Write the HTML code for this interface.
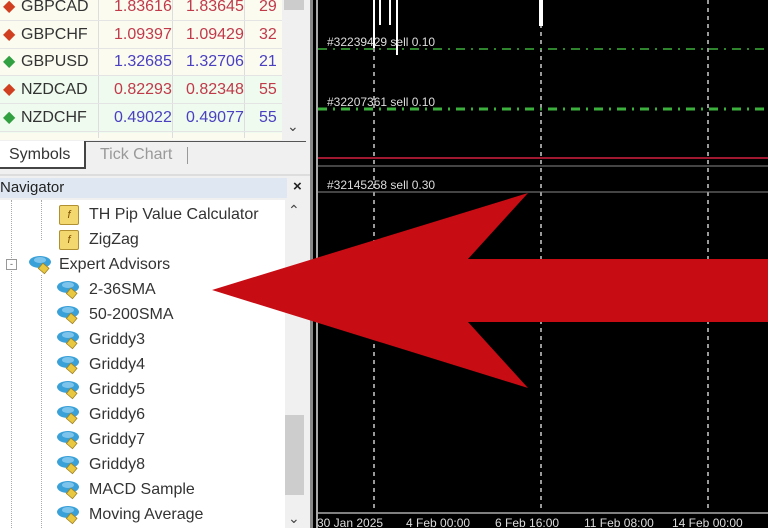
<!DOCTYPE html><html><head><style>
body{margin:0;width:768px;height:528px;overflow:hidden;background:#000;font-family:"Liberation Sans",sans-serif;position:relative}
.a{position:absolute}
.lp{left:0;top:0;width:310px;height:528px;background:#f0f0f0}
.row{position:absolute;left:0;width:282px;height:27px;font-size:16px;line-height:27px;border-bottom:1px solid #e4e4e4}
.row span{position:absolute}
.nv{position:absolute;font-size:16px;color:#333;line-height:20px}
</style></head><body>
<div class="a lp">
 <div class="a" style="left:0;top:0;width:282px;height:140px;background:#fbfbf0"></div>
 <div class="a" style="left:0;top:75px;width:282px;height:58px;background:#eefbee"></div>
 <div class="a" style="left:98px;top:0;width:1px;height:138px;background:#ddd"></div>
 <div class="a" style="left:172px;top:0;width:1px;height:138px;background:#ddd"></div>
 <div class="a" style="left:244px;top:0;width:1px;height:138px;background:#ddd"></div>
 <div class="a" style="left:282px;top:0;width:24px;height:140px;background:#f0f0f0"></div>
 <div class="a" style="left:284px;top:0;width:20px;height:10px;background:#ccc"></div>
 <div class="a" style="left:287px;top:118px;font-size:14px;color:#444">&#8964;</div>
 <div class="row" style="top:-7px"><span style="left:3px;color:#d04020">◆</span><span style="left:21px;color:#333">GBPCAD</span><span style="left:114px;color:#c03a4a">1.83616</span><span style="left:186px;color:#c03a4a">1.83645</span><span style="left:259px;color:#c03a4a">29</span></div>
 <div class="row" style="top:21px"><span style="left:3px;color:#d04020">◆</span><span style="left:21px;color:#333">GBPCHF</span><span style="left:114px;color:#c03a4a">1.09397</span><span style="left:186px;color:#c03a4a">1.09429</span><span style="left:259px;color:#c03a4a">32</span></div>
 <div class="row" style="top:48px"><span style="left:3px;color:#30a040">◆</span><span style="left:21px;color:#333">GBPUSD</span><span style="left:114px;color:#4a40c0">1.32685</span><span style="left:186px;color:#4a40c0">1.32706</span><span style="left:259px;color:#4a40c0">21</span></div>
 <div class="row" style="top:76px"><span style="left:3px;color:#d04020">◆</span><span style="left:21px;color:#333">NZDCAD</span><span style="left:114px;color:#c03a4a">0.82293</span><span style="left:186px;color:#c03a4a">0.82348</span><span style="left:259px;color:#c03a4a">55</span></div>
 <div class="row" style="top:104px"><span style="left:3px;color:#30a040">◆</span><span style="left:21px;color:#333">NZDCHF</span><span style="left:114px;color:#4a40c0">0.49022</span><span style="left:186px;color:#4a40c0">0.49077</span><span style="left:259px;color:#4a40c0">55</span></div>
 <div class="a" style="left:0;top:141px;width:306px;height:1px;background:#555"></div>
 <div class="a" style="left:0;top:141px;width:84px;height:26px;background:#fff;border-right:2px solid #444;border-bottom:2px solid #444"></div>
 <div class="a" style="left:9px;top:146px;font-size:16px;color:#333">Symbols</div>
 <div class="a" style="left:100px;top:146px;font-size:16px;color:#999">Tick Chart</div>
 <div class="a" style="left:187px;top:147px;width:1px;height:17px;background:#999"></div>
 <div class="a" style="left:0;top:174px;width:310px;height:2px;background:#ddd"></div>
 <div class="a" style="left:0;top:178px;width:287px;height:20px;background:#dfe8f2"></div>
 <div class="a" style="left:0;top:179px;font-size:15px;color:#222">Navigator</div>
 <div class="a" style="left:293px;top:178px;font-size:15px;font-weight:bold;color:#222">×</div>
 <div class="a" style="left:0;top:200px;width:285px;height:328px;background:#fff"></div>
 <div class="a" style="left:285px;top:200px;width:21px;height:328px;background:#f0f0f0"></div>
 <div class="a" style="left:285px;top:415px;width:19px;height:80px;background:#cdcdcd"></div>
 <div class="a" style="left:288px;top:202px;font-size:14px;color:#444">&#8963;</div>
 <div class="a" style="left:288px;top:510px;font-size:14px;color:#444">&#8964;</div>
 <div class="a" style="left:11px;top:200px;border-left:1px dotted #aaa;height:328px"></div>
 <div class="a" style="left:41px;top:200px;border-left:1px dotted #aaa;height:40px"></div>
 <div class="a" style="left:41px;top:275px;border-left:1px dotted #aaa;height:253px"></div>
 <div class="a" style="left:6px;top:259px;width:9px;height:9px;border:1px solid #999;background:#fff;font-size:9px;line-height:8px;text-align:center;color:#555">-</div>
 <div class="a" style="left:59px;top:205px;width:18px;height:18px;background:#f3d870;border:1px solid #b09030;border-radius:2px;font-size:11px;font-style:italic;color:#805000;text-align:center;line-height:18px">f</div>
 <div class="a" style="left:59px;top:230px;width:18px;height:18px;background:#f3d870;border:1px solid #b09030;border-radius:2px;font-size:11px;font-style:italic;color:#805000;text-align:center;line-height:18px">f</div>
 <div class="nv" style="left:89px;top:205px">TH Pip Value Calculator</div>
 <div class="nv" style="left:89px;top:230px">ZigZag</div>
 <div class="nv" style="left:59px;top:255px">Expert Advisors</div>
 <div class="nv" style="left:89px;top:280px">2-36SMA</div>
 <div class="nv" style="left:89px;top:305px">50-200SMA</div>
 <div class="nv" style="left:89px;top:330px">Griddy3</div>
 <div class="nv" style="left:89px;top:355px">Griddy4</div>
 <div class="nv" style="left:89px;top:380px">Griddy5</div>
 <div class="nv" style="left:89px;top:405px">Griddy6</div>
 <div class="nv" style="left:89px;top:430px">Griddy7</div>
 <div class="nv" style="left:89px;top:455px">Griddy8</div>
 <div class="nv" style="left:89px;top:480px">MACD Sample</div>
 <div class="nv" style="left:89px;top:505px">Moving Average</div>
</div>
<div class="a" style="left:310px;top:0;width:3px;height:528px;background:#888"></div>
<svg class="a" style="left:0;top:0" width="768" height="528">
 <defs><g id="ea"><ellipse cx="11" cy="6" rx="11" ry="6" fill="#3aa0d8"/><ellipse cx="11" cy="4" rx="6" ry="3" fill="#7cc4ec"/><rect x="11" y="9" width="8" height="7" fill="#e8c840" stroke="#a08020" stroke-width="0.8" transform="rotate(40 15 12)"/></g></defs>
 <line x1="317" y1="0" x2="317" y2="528" stroke="#aaa" stroke-width="2"/>
 <g stroke="#ccc" stroke-dasharray="4,4" stroke-width="1.5">
  <line x1="374" y1="0" x2="374" y2="512"/><line x1="541" y1="0" x2="541" y2="512"/><line x1="708" y1="0" x2="708" y2="512"/>
 </g>
 <g stroke="#fff" stroke-width="2"><line x1="374" y1="0" x2="374" y2="48"/><line x1="380" y1="0" x2="380" y2="25"/><line x1="390" y1="0" x2="390" y2="25"/><line x1="397" y1="0" x2="397" y2="55"/></g>
 <line x1="541" y1="0" x2="541" y2="26" stroke="#fff" stroke-width="4"/>
 <line x1="318" y1="49" x2="768" y2="49" stroke="#3cb03c" stroke-width="1.5" stroke-dasharray="9,6,2,6"/>
 <line x1="318" y1="109" x2="768" y2="109" stroke="#3cb03c" stroke-width="3" stroke-dasharray="9,6,2,6"/>
 <line x1="318" y1="158" x2="768" y2="158" stroke="#a01830" stroke-width="2"/>
 <line x1="318" y1="166" x2="768" y2="166" stroke="#888" stroke-width="1"/>
 <line x1="318" y1="192" x2="768" y2="192" stroke="#888" stroke-width="1"/>
 <line x1="318" y1="513" x2="768" y2="513" stroke="#aaa" stroke-width="1.5"/>
 <g fill="#ddd" font-family="Liberation Sans" font-size="12">
  <text x="327" y="46">#32239429 sell 0.10</text>
  <text x="327" y="106">#32207361 sell 0.10</text>
  <text x="327" y="189">#32145258 sell 0.30</text>
  <text x="317" y="527">30 Jan 2025</text><text x="406" y="527">4 Feb 00:00</text><text x="495" y="527">6 Feb 16:00</text><text x="584" y="527">11 Feb 08:00</text><text x="672" y="527">14 Feb 00:00</text>
 </g>
 <polygon points="212,290 528,193 468,259 768,259 768,322 468,322 528,388" fill="#c80c14"/>
 <use href="#ea" x="29" y="256"/>
 <use href="#ea" x="57" y="281"/><use href="#ea" x="57" y="306"/><use href="#ea" x="57" y="331"/><use href="#ea" x="57" y="356"/><use href="#ea" x="57" y="381"/><use href="#ea" x="57" y="406"/><use href="#ea" x="57" y="431"/><use href="#ea" x="57" y="456"/><use href="#ea" x="57" y="481"/><use href="#ea" x="57" y="506"/>
</svg>
</body></html>
